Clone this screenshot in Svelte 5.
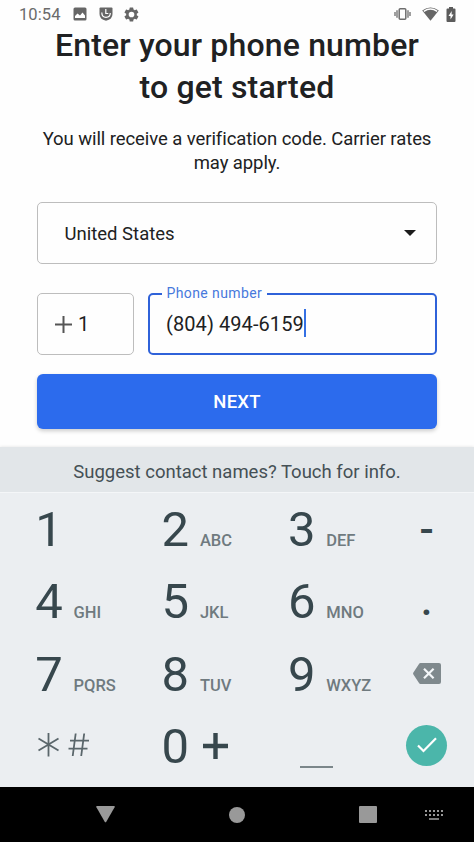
<script lang="ts">
  type Key = { digit: string; letters?: string };

  let country = "United States";
  let dialCode = "1";
  let phone = "(804) 494-6159";

  const rows: { keys: Key[]; side: string }[] = [
    {
      keys: [
        { digit: "1" },
        { digit: "2", letters: "ABC" },
        { digit: "3", letters: "DEF" },
      ],
      side: "dash",
    },
    {
      keys: [
        { digit: "4", letters: "GHI" },
        { digit: "5", letters: "JKL" },
        { digit: "6", letters: "MNO" },
      ],
      side: "dot",
    },
    {
      keys: [
        { digit: "7", letters: "PQRS" },
        { digit: "8", letters: "TUV" },
        { digit: "9", letters: "WXYZ" },
      ],
      side: "delete",
    },
  ];
</script>

<div class="screen">
  <header class="status">
    <span class="time">10:54</span>
    <svg class="photo" width="14" height="14" viewBox="0 0 14 14">
      <rect x="0.5" y="0.5" width="13" height="13" rx="1.5" fill="#666" />
      <path d="M2 11V9l2.5-2.5L7 8.5l2.5-3L12 8.5V11z" fill="#fff" />
    </svg>
    <svg class="shield" width="14" height="14" viewBox="0 0 14 14">
      <path d="M.5 1.5Q.5.5 1.5.5h11q1 0 1 1V7Q13.500 12.500 7 13.700 .5 12.500 .5 7z" fill="#666" />
      <path d="M6.800 2v4.500h2.500M2.800 5.500q0 4.800 4.200 4.800t4.300-4.300" fill="none" stroke="#fff" stroke-width="1.200" />
    </svg>
    <svg class="gear" width="17" height="17" viewBox="0 0 24 24">
      <path
        fill="#666"
        fill-rule="evenodd"
        d="M19.400 13c.1-.3.1-.6.1-1s0-.7-.1-1l2.100-1.600c.2-.2.3-.4.1-.7l-2-3.400c-.1-.2-.4-.3-.6-.2l-2.500 1a7 7 0 0 0-1.700-1l-.4-2.600a.5.5 0 0 0-.5-.5h-4a.5.5 0 0 0-.5.500L9 5.100a7 7 0 0 0-1.700 1l-2.500-1c-.2-.1-.5 0-.6.200l-2 3.400c-.1.200-.1.500.1.700L4.500 11a8 8 0 0 0 0 2l-2.200 1.600c-.2.200-.2.400-.1.700l2 3.400c.1.200.4.300.6.200l2.500-1c.5.400 1.100.8 1.700 1l.4 2.600c0 .3.200.5.500.5h4c.3 0 .5-.2.500-.5l.4-2.600c.6-.2 1.200-.6 1.700-1l2.500 1c.2.100.5 0 .6-.2l2-3.400c.1-.2.1-.5-.1-.7zM12 16a4 4 0 1 1 0-8 4 4 0 0 1 0 8z"
      />
    </svg>
    <svg class="vibrate" width="17" height="14" viewBox="0 0 17 14">
      <rect x="5.200" y="1.700" width="6.600" height="10.600" rx="1" fill="none" stroke="#6e6e6e" stroke-width="1.500" />
      <path d="M3 3.200v7.600M14 3.200v7.600M1 5v4M16 5v4" stroke="#808080" stroke-width="1.500" />
    </svg>
    <svg class="wifi" width="17" height="14" viewBox="0 0 17 14">
      <path d="M8.500 13.800L.2 3.500Q8.500-2.700 16.800 3.500z" fill="#666" />
      <path d="M1.800 4.400Q8.500-.3 15.200 4.400" fill="none" stroke="#fff" stroke-width="1.400" />
    </svg>
    <svg class="battery" width="10" height="15" viewBox="0 0 10 15">
      <path d="M3 0h4v1.500h1.500q1 0 1 1V14q0 1-1 1h-7q-1 0-1-1V2.500q0-1 1-1H3z" fill="#5c5c5c" />
      <path d="M5.700 4L2.500 9h2v3.500L7.600 7.500h-2z" fill="#fff" />
    </svg>
  </header>

  <main>
    <h1>Enter your phone number<br />to get started</h1>
    <p class="hint">
      You will receive a verification code. Carrier rates<br />may apply.
    </p>

    <div class="field country">
      <span>{country}</span>
      <svg width="12" height="6" viewBox="0 0 12 6">
        <path d="M0 0h12L6 6z" fill="#1c1c1c" />
      </svg>
    </div>

    <div class="number-row">
      <div class="field code">
        <svg width="17" height="17" viewBox="0 0 17 17">
          <path d="M8.500 0v17M0 8.500h17" stroke="#555" stroke-width="2" />
        </svg>
        <span>{dialCode}</span>
      </div>
      <div class="field phone">
        <span class="label">Phone number</span>
        <span class="value">{phone}</span>
        <span class="caret"></span>
      </div>
    </div>

    <button class="next" type="button">NEXT</button>
  </main>

  <section class="keyboard">
    <div class="suggest"><span>Suggest contact names? Touch for info.</span></div>
    <div class="keys">
      {#each rows as row}
        {#each row.keys as key}
          <div class="key">
            <span class="digit">{key.digit}</span>
            {#if key.letters}<span class="letters">{key.letters}</span>{/if}
          </div>
        {/each}
        <div class="side">
          {#if row.side === "dash"}
            <span class="dash">-</span>
          {:else if row.side === "dot"}
            <span class="dot">.</span>
          {:else}
            <svg width="28" height="21" viewBox="0 0 28 21">
              <path d="M7.500 0H26q2 0 2 2v17q0 2-2 2H7.500Q6.500 21 6 20L.4 11.500q-.6-1 0-2L6 1Q6.500 0 7.500 0z" fill="#7f898d" />
              <path d="M11 5.700l9.600 9.600M20.600 5.700L11 15.300" stroke="#f3f6f8" stroke-width="2.200" />
            </svg>
          {/if}
        </div>
      {/each}

      <div class="key symbols">
        <svg width="51" height="24" viewBox="0 0 51 24" fill="none" stroke="#5a666b" stroke-width="1.800">
          <path d="M10.500 0v23.500M.5 5.500l20 12M20.500 5.500l-20 12" />
          <path d="M37.700.5l-3 22.500M46.200.5l-3 22.500M32 7.700h19M30.500 15.700h19" />
        </svg>
      </div>
      <div class="key">
        <span class="digit">0</span>
        <svg class="plus" width="25" height="26" viewBox="0 0 25 26">
          <path d="M12.500 0v26M0 13h25" stroke="#37474d" stroke-width="4.400" />
        </svg>
      </div>
      <div class="key space"><span></span></div>
      <div class="side">
        <div class="done">
          <svg width="20" height="16" viewBox="0 0 20 16">
            <path d="M1 8.500l5.500 5.500L19 1.200" fill="none" stroke="#fff" stroke-width="2.200" />
          </svg>
        </div>
      </div>
    </div>
  </section>

  <nav>
    <svg class="back" width="19" height="17" viewBox="0 0 19 17">
      <path d="M1 0h17q1.200 0 .6 1.200L10.300 15.700q-.8 1.200-1.600 0L.4 1.200Q-.2 0 1 0z" fill="#999" />
    </svg>
    <span class="home"></span>
    <span class="recent"></span>
    <svg class="ime" width="18" height="12" viewBox="0 0 18 12">
      <path
        d="M0 2h18M0 6h18"
        stroke="#999"
        stroke-width="2"
        stroke-dasharray="2 2"
      />
      <path d="M4 10h10" stroke="#999" stroke-width="1.600" />
    </svg>
  </nav>
</div>

<style>
  :global(body) {
    margin: 0;
    background: #fff;
  }

  .screen {
    display: flex;
    flex-direction: column;
    width: 474px;
    height: 842px;
    overflow: hidden;
    background: #fefefe;
    color: #202122;
    font-family: Roboto, "Liberation Sans", sans-serif;
  }

  .status {
    box-sizing: border-box;
    display: flex;
    align-items: center;
    height: 24px;
    padding: 4px 18px 0 19px;
    color: #6b6b6b;
    flex: none;
  }

  .time {
    width: 54px;
    font-size: 16.500px;
    line-height: 20px;
    letter-spacing: 0.1px;
    transform: translateY(1px);
  }

  .shield {
    margin-left: 12px;
  }

  .gear {
    margin-left: 10px;
  }

  .vibrate {
    margin-left: auto;
  }

  .wifi {
    margin-left: 11px;
  }

  .battery {
    margin-left: 7px;
  }

  main {
    flex: none;
    height: 423px;
    padding: 0 37px;
    box-sizing: border-box;
  }

  h1 {
    margin: 0 -20px;
    text-align: center;
    font-size: 32px;
    font-weight: 500;
    line-height: 42px;
    letter-spacing: 0.16px;
  }

  .hint {
    margin: 19px -20px 0;
    text-align: center;
    font-size: 18.5px;
    line-height: 24px;
    letter-spacing: -0.08px;
    white-space: nowrap;
  }

  .field {
    box-sizing: border-box;
    display: flex;
    align-items: center;
    height: 62px;
    border: 1.5px solid #bdbdbd;
    border-radius: 5px;
  }

  .country {
    margin-top: 27px;
    padding: 2px 20px 0 26.500px;
    justify-content: space-between;
    font-size: 18.5px;
  }

  .country svg {
    margin-top: -2px;
  }

  .number-row {
    display: flex;
    gap: 14px;
    margin-top: 28.500px;
  }

  .code {
    width: 97px;
    padding: 1px 0 0 17px;
    gap: 6px;
    font-size: 20px;
  }

  .phone {
    position: relative;
    flex: 1;
    border: 2px solid #2f62d9;
    padding: 1px 0 0 16px;
    font-size: 20px;
    letter-spacing: 0.08px;
  }

  .label {
    position: absolute;
    top: -11px;
    left: 11.500px;
    padding: 0 5px;
    background: #fefefe;
    color: #4779dc;
    font-size: 14px;
    line-height: 18px;
    letter-spacing: 0.4px;
  }

  .caret {
    width: 2px;
    height: 28px;
    margin-top: -3px;
    background: #3470e4;
  }

  .next {
    display: block;
    width: 100%;
    height: 55px;
    margin-top: 19px;
    padding: 2px 0 0;
    border: 0;
    border-radius: 6px;
    background: #2c6bed;
    box-shadow: 0 2px 4px rgba(0, 0, 0, 0.2);
    color: #fff;
    font: 500 18.5px/53px Roboto, sans-serif;
    letter-spacing: 0.2px;
  }

  .keyboard {
    flex: none;
    height: 340px;
    background: #ebeef1;
    color: #37474d;
    box-shadow: 0 0 3px rgba(0, 0, 0, 0.12);
  }

  .suggest {
    box-sizing: border-box;
    height: 46px;
    padding-top: 2px;
    border-bottom: 1px solid #f4f6f8;
    background: #e2e6e9;
    color: #455055;
    text-align: center;
    font-size: 18.5px;
    line-height: 46px;
  }

  .keys {
    display: grid;
    grid-template-columns: 126.400px 126.400px 126.400px 21px;
    grid-auto-rows: 72.300px;
    padding-left: 36px;
  }

  .key {
    display: flex;
    align-items: baseline;
    line-height: 73px;
  }

  .digit {
    width: 38.300px;
    margin-left: -0.800px;
    font-size: 49px;
  }

  .letters {
    color: #6f7a7f;
    font-size: 16.500px;
    font-weight: 500;
  }

  .side {
    display: flex;
    align-items: center;
    justify-content: center;
    margin: 0 -10px 0 1px;
    width: 21px;
  }

  .side svg,
  .done {
    flex: none;
  }

  .dash,
  .dot {
    font-size: 42px;
    font-weight: 500;
    line-height: 72px;
  }

  .dash {
    padding-top: 2px;
  }

  .symbols,
  .space {
    align-items: center;
  }

  .symbols svg {
    margin: -2px 0 0 1.500px;
  }

  .plus {
    margin-left: 3px;
    align-self: center;
  }

  .space span {
    width: 33px;
    height: 2px;
    margin: 42px 0 0 11px;
    background: #7b868a;
  }

  .done {
    display: flex;
    align-items: center;
    justify-content: center;
    width: 41px;
    height: 41px;
    margin-top: -2px;
    border-radius: 50%;
    background: #4bb6aa;
  }

  nav {
    display: flex;
    align-items: center;
    flex: 1;
    padding-left: 96px;
    background: #000;
  }

  .home {
    width: 16px;
    height: 16px;
    margin-left: 114px;
    border-radius: 50%;
    background: #999;
  }

  .recent {
    width: 18px;
    height: 17px;
    margin-left: 114px;
    border-radius: 1px;
    background: #999;
  }

  .ime {
    margin-left: 48px;
  }
</style>
